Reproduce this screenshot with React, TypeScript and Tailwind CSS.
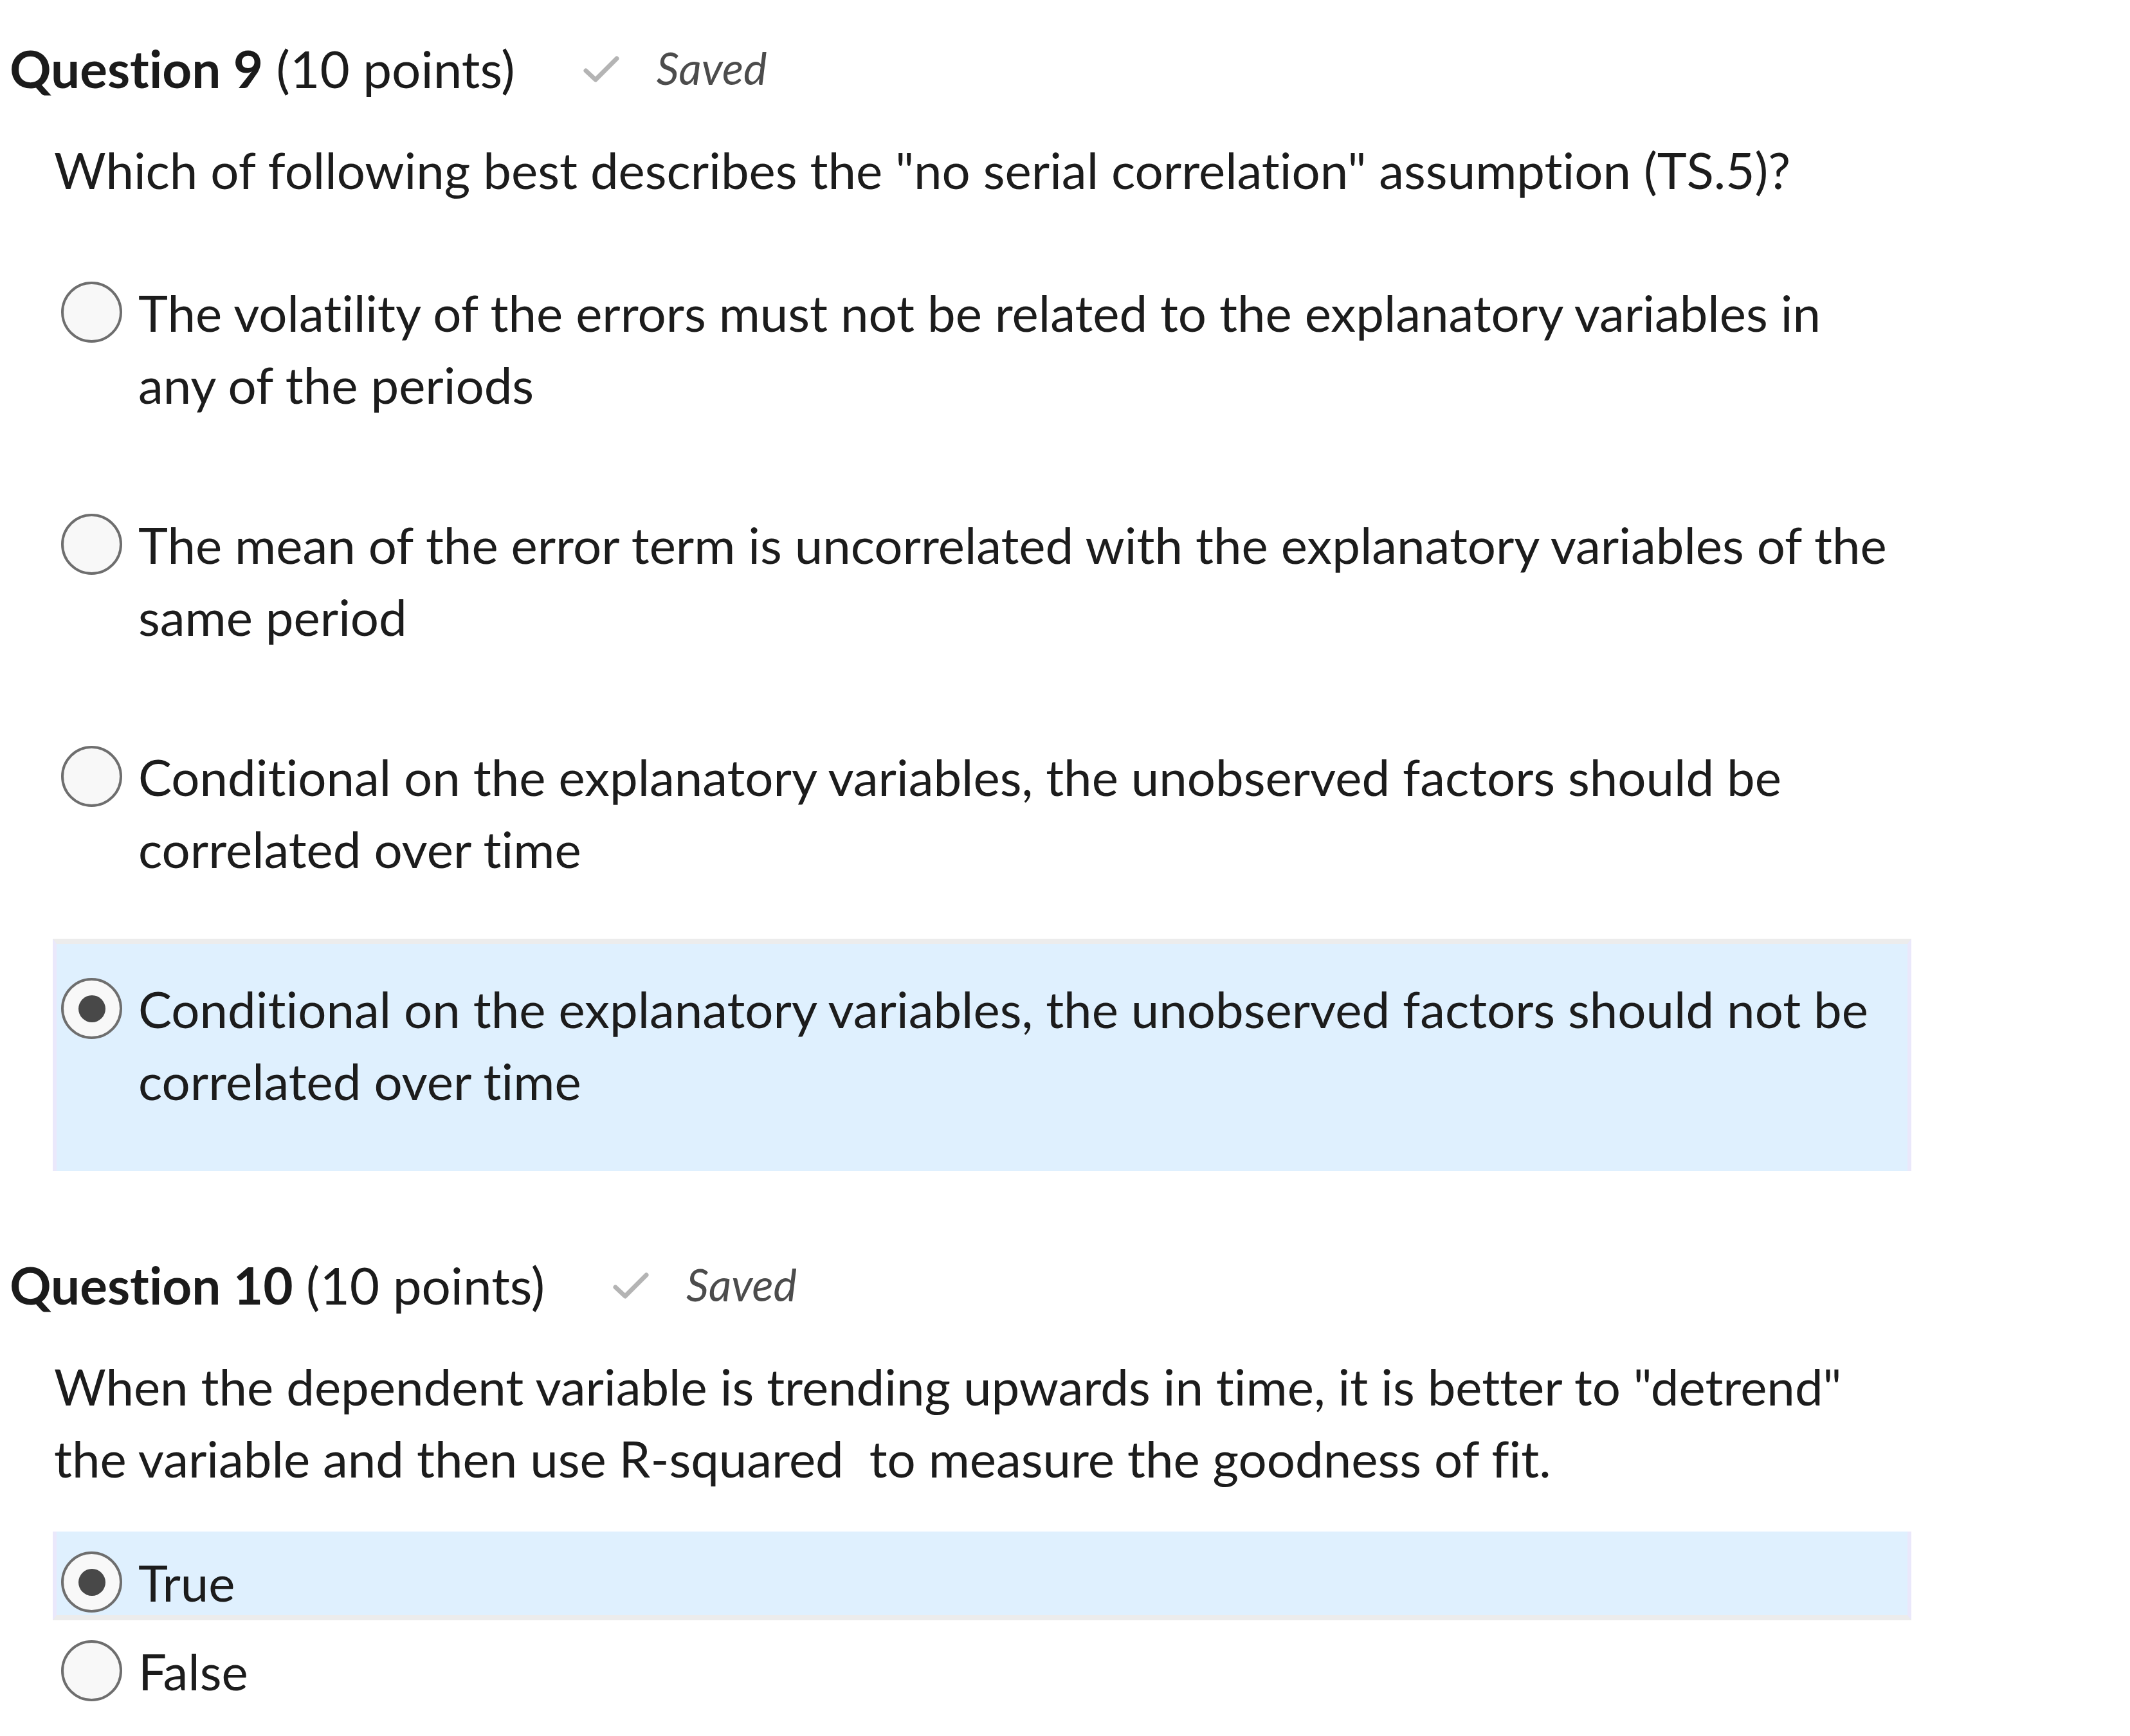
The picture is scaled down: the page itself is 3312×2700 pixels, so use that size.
import { ReactNode } from "react";

interface RadioProps {
    checked?: boolean;
}

const Radio = ({ checked }: RadioProps) => (
    <span className="shrink-0 w-[95px] h-[95px] rounded-full border-[4px] border-[#6e6e6e] bg-[#f8f8f8] flex items-center justify-center">
        {checked && <span className="w-[42px] h-[42px] rounded-full bg-[#484848]"></span>}
    </span>
);

const CheckMark = () => (
    <svg width="60" height="48" viewBox="0 0 60 48" className="shrink-0">
        <path d="M6 26 L21 40 L54 7" fill="none" stroke="#b4b4b4" strokeWidth="7" strokeLinecap="round" strokeLinejoin="round" />
    </svg>
);

interface HeaderProps {
    num: number;
}

const QuestionHeader = ({ num }: HeaderProps) => (
    <div className="flex items-center h-[120px] text-[80px] leading-[120px] text-[#1b1b1b]">
        <span>
            <span className="font-bold">Question {num}</span> (10 points)
        </span>
        <span className="ml-[104px] mt-[4px]"><CheckMark /></span>
        <span className="ml-[56px] italic text-[69px] text-[#4c4c4c]">Saved</span>
    </div>
);

interface ChoiceProps {
    checked?: boolean;
    children: ReactNode;
}

const LongChoice = ({ checked, children }: ChoiceProps) => (
    <div
        className={
            checked
                ? "flex items-start h-[361px] bg-[#dff0fe] border-t-[8px] border-t-[#ececec] border-x-[6px] border-x-[#eae8fb] pt-[45px] pl-[7px] pr-[20px]"
                : "flex items-start h-[361px] pt-[53px] pl-[13px] pr-[26px]"
        }
    >
        <span className="mt-[8px]"><Radio checked={checked} /></span>
        <p className="ml-[25px] text-[78px] leading-[112px]">{children}</p>
    </div>
);

const ShortChoice = ({ checked, children }: ChoiceProps) => (
    <div
        className={
            checked
                ? "flex items-center h-[138px] bg-[#dff0fe] border-b-[8px] border-b-[#ececec] border-x-[6px] border-x-[#eae8fb] pt-[31px] pb-[4px] pl-[7px]"
                : "flex items-center h-[138px] pt-[31px] pb-[12px] pl-[13px]"
        }
    >
        <Radio checked={checked} />
        <span className="ml-[25px] text-[78px] leading-[112px]">{children}</span>
    </div>
);

const q10Text =
    'When the dependent variable is trending upwards in time, it is better to "detrend" the variable and then use R-squared  to measure the goodness of fit.';

export default function App() {
    return (
        <div
            className="w-[3312px] h-[2700px] bg-white text-[#1c1c1c] pl-[15px] pt-[46px] [font-variant-ligatures:none]"
            style={{ fontFamily: "Lato, 'Open Sans', sans-serif" }}
        >
            <QuestionHeader num={9} />
            <p className="ml-[69px] mt-[42px] text-[78px] leading-[112px]">
                Which of following best describes the "no serial correlation" assumption (TS.5)?
            </p>
            <div className="ml-[67px] mt-[57px] w-[2890px] flex flex-col">
                <LongChoice>
                    The volatility of the errors must not be related to the explanatory variables in any of the periods
                </LongChoice>
                <LongChoice>
                    The mean of the error term is uncorrelated with the explanatory variables of the same period
                </LongChoice>
                <LongChoice>
                    Conditional on the explanatory variables, the unobserved factors should be correlated over time
                </LongChoice>
                <LongChoice checked>
                    Conditional on the explanatory variables, the unobserved factors should not be correlated over time
                </LongChoice>
            </div>
            <div className="mt-[117px]">
                <QuestionHeader num={10} />
            </div>
            <p className="ml-[69px] mt-[42px] w-[2888px] text-[78px] leading-[112px] whitespace-pre-wrap">{q10Text}</p>
            <div className="ml-[67px] mt-[58px] w-[2890px] flex flex-col">
                <ShortChoice checked>True</ShortChoice>
                <ShortChoice>False</ShortChoice>
            </div>
        </div>
    );
}
